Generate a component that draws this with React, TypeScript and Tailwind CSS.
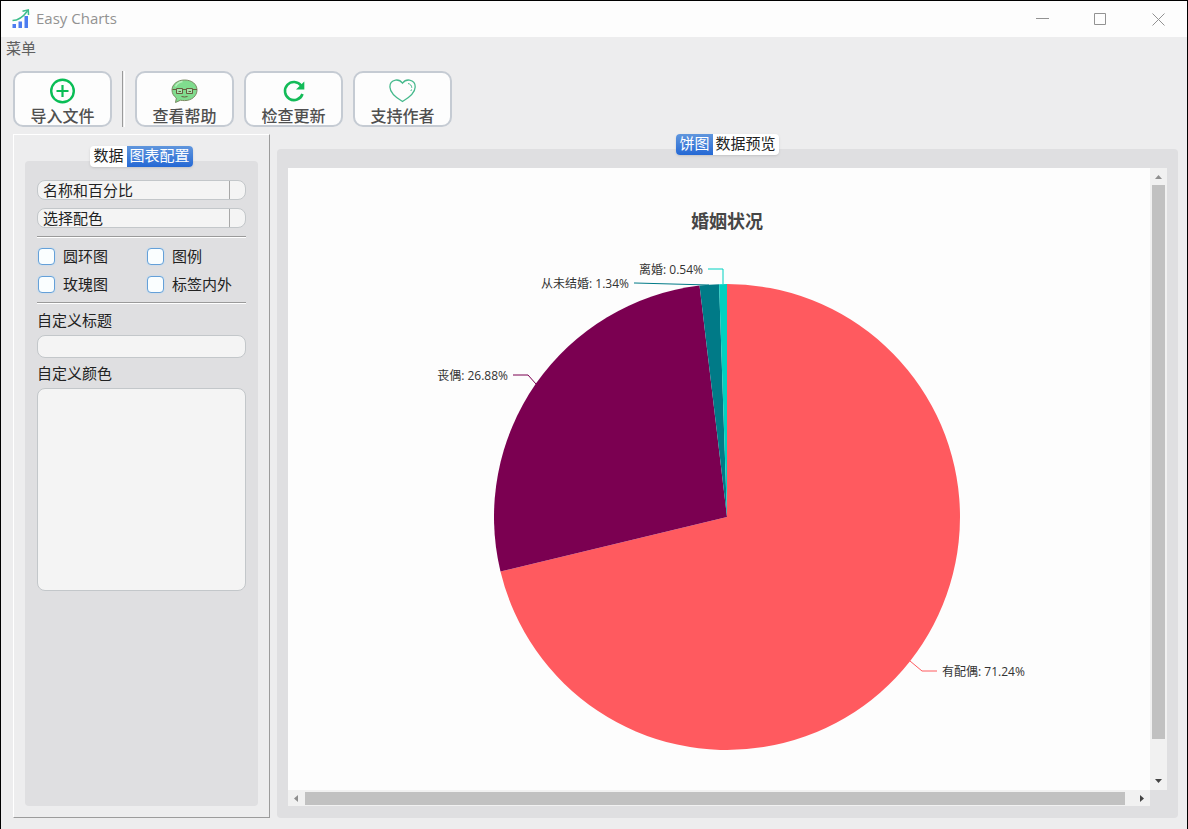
import { useState } from 'react';
import type { ReactNode } from 'react';

const SLICES = [
    { name: '有配偶', value: 71.24, color: '#ff5a5f', line: '622,493 634,503 649,503', x: 654, y: 508, anchor: 'start' as const },
    { name: '丧偶', value: 26.88, color: '#7b0051', line: '248,216 240,207 225,207', x: 220, y: 212, anchor: 'end' as const },
    { name: '从未结婚', value: 1.34, color: '#007a87', line: '421,117 347,115 346,115', x: 341, y: 120, anchor: 'end' as const },
    { name: '离婚', value: 0.54, color: '#00d1c1', line: '435,116 435,101 420,101', x: 415, y: 106, anchor: 'end' as const },
];

const CENTER = { x: 439, y: 349 };
const RADIUS = 233;

const pointAt = (percent: number) => {
    const angle = (percent / 100) * Math.PI * 2 - Math.PI / 2;
    return `${CENTER.x + RADIUS * Math.cos(angle)} ${CENTER.y + RADIUS * Math.sin(angle)}`;
};

const slicePath = (start: number, value: number) =>
    `M${CENTER.x} ${CENTER.y} L${pointAt(start)} A${RADIUS} ${RADIUS} 0 ${value > 50 ? 1 : 0} 1 ${pointAt(start + value)} Z`;

const PieChart = () => {
    let start = 0;
    return (
        <svg viewBox="0 0 862 622" className="w-full h-full" role="img" aria-label="婚姻状况">
            <text x="439" y="60" textAnchor="middle" fontSize="18" fontWeight="700" fill="#464646">婚姻状况</text>
            {SLICES.map(slice => {
                const d = slicePath(start, slice.value);
                start += slice.value;
                return (
                    <g key={slice.name}>
                        <path d={d} fill={slice.color} />
                        <polyline points={slice.line} fill="none" stroke={slice.color} />
                        <text x={slice.x} y={slice.y} textAnchor={slice.anchor} fontSize="12" fill="#333">
                            {slice.name}: {slice.value}%
                        </text>
                    </g>
                );
            })}
        </svg>
    );
};

const LogoIcon = () => (
    <svg width="18" height="20" viewBox="0 0 18 20" aria-hidden="true">
        <path d="M.5 15H4v4H.5zM6.500 12.500H10V19H6.500zM12.500 7H16v12h-3.500z" fill="#4c7cf0" />
        <path d="M.5 11.500C7 11.500 11 8 15.500 2" fill="none" stroke="#3dbd8c" strokeWidth="1.5" />
        <path d="M10.500 2.200 16.300 1 16.500 6" fill="none" stroke="#3dbd8c" strokeWidth="1.500" />
    </svg>
);

const ImportIcon = () => (
    <svg width="26" height="26" viewBox="0 0 26 26" fill="none" stroke="#09bd55" aria-hidden="true">
        <circle cx="12.500" cy="13" r="11.300" strokeWidth="2.400" />
        <path d="M12.500 7v12M6.500 13h12" strokeWidth="2.200" />
    </svg>
);

const HelpIcon = () => (
    <svg width="28" height="26" viewBox="0 0 28 26" fill="none" aria-hidden="true">
        <path
            d="M13.500 2C6.500 2 1 6.300 1 12c0 3.500 1.800 6.200 4.400 8L4.500 24.500l5-2.300c1.300.3 2.600.4 4 .4 7.500 0 12.500-4.900 12.500-10.600S21 2 13.500 2Z"
            fill="#80dc8e"
            stroke="#7a8a62"
        />
        <path d="M4.500 8.500C6 5.500 8.500 4 11.500 3.600" stroke="#b9f0bf" strokeWidth="1.500" />
        <path d="M5.500 10.500h6v5h-6zM15.500 10.500h6v5h-6z" fill="#a5e6ac" stroke="#695c40" />
        <path d="M11.500 11.500h4M1.500 11.500h4M21.500 11.500H26M7.500 13.500H10M17.500 13.500H20M10.500 18.500q3 1 6 0" stroke="#695c40" />
    </svg>
);

const UpdateIcon = () => (
    <svg width="26" height="26" viewBox="0 0 26 26" fill="none" aria-hidden="true">
        <path d="M20.300 7.800A9 9 0 1 0 21.500 16" stroke="#13bb58" strokeWidth="2.600" />
        <path d="M23.300 3.500v8h-8.300z" fill="#13bb58" />
    </svg>
);

const HeartIcon = () => (
    <svg width="28" height="26" viewBox="0 0 28 26" fill="none" stroke="#45b98c" strokeWidth="1.300" aria-hidden="true">
        <path d="M13.500 5.200C11.500 2.500 9 1.700 6.500 2.100 3 2.700.8 5.500.9 9c.2 6.300 6.600 11 12.600 14.500C19.500 20 26 15.300 26.200 9c.1-3.500-2.200-6.300-5.700-6.900-2.500-.4-5 .4-7 3.100Z" />
        <path d="M19 5.500c2.300.5 3.700 2 3.800 4.300M22.500 11.500l-.6 1.500" strokeWidth="1" />
    </svg>
);

const ToolButton = ({ label, children }: { label: string; children: ReactNode }) => (
    <button className="flex flex-col items-center justify-end gap-[3px] w-[99px] h-14 rounded-[10px] border-2 border-[#c5cbd3] bg-[#fdfdfd] text-base leading-[18px] font-medium text-[#505050]">
        {children}
        <span>{label}</span>
    </button>
);

const Tabs = ({ items, initial }: { items: string[]; initial: number }) => {
    const [active, setActive] = useState(initial);
    return (
        <div role="tablist" className="relative z-10 flex self-center h-[21px] -mb-[6px] rounded bg-white shadow-sm overflow-hidden">
            {items.map((item, i) => (
                <button
                    key={item}
                    role="tab"
                    aria-selected={i === active}
                    onClick={() => setActive(i)}
                    className={i === active
                        ? 'px-[3px] pb-[2px] leading-[19px] text-white bg-linear-to-b from-[#6096dd] to-[#2468d4]'
                        : 'px-[3px] pb-[2px] leading-[19px] text-[#222]'}
                >
                    {item}
                </button>
            ))}
        </div>
    );
};

const ComboBox = ({ label, options }: { label: string; options: string[] }) => (
    <div className="flex h-5 shrink-0 rounded-lg border border-[#c3c7ca] bg-[#f4f4f4] overflow-hidden">
        <select aria-label={label} className="flex-1 min-w-0 appearance-none pl-[5px] leading-[18px] outline-none">
            {options.map(option => <option key={option}>{option}</option>)}
        </select>
        <span className="w-4 border-l border-[#a8a8a8]" />
    </div>
);

const Divider = () => <hr className="h-[2px] shrink-0 border-t border-b border-t-[#9a9a9a] border-b-white" />;

const CheckItem = ({ label }: { label: string }) => (
    <label className="flex items-center gap-2 h-5">
        <input
            type="checkbox"
            className="appearance-none w-[17px] h-[17px] rounded border border-[#65a0d8] bg-[#fafeff] checked:bg-[#3b82e6] shadow-[0_0_2px_#b5d8f5]"
        />
        {label}
    </label>
);

const Arrow = ({ points, color }: { points: string; color: string }) => (
    <svg width="17" height="17" viewBox="0 0 17 17" className="shrink-0" aria-hidden="true">
        <polygon points={points} fill={color} />
    </svg>
);

const ConfigPanel = () => (
    <section className="flex flex-col w-[257px] shrink-0 p-[11px] border border-t-white border-l-white border-r-[#9c9c9c] border-b-[#9c9c9c]">
        <Tabs items={['数据', '图表配置']} initial={1} />
        <div className="flex-1 flex flex-col gap-2 px-3 pt-[19px] rounded bg-[#dfdfe1]">
            <ComboBox label="标签格式" options={['名称和百分比', '名称', '百分比']} />
            <ComboBox label="配色" options={['选择配色']} />
            <Divider />
            <div className="grid grid-cols-[109px_1fr] gap-y-2 px-px">
                <CheckItem label="圆环图" />
                <CheckItem label="图例" />
                <CheckItem label="玫瑰图" />
                <CheckItem label="标签内外" />
            </div>
            <Divider />
            <div className="flex flex-col gap-[3px] -mt-1">
                <label htmlFor="title" className="leading-6">自定义标题</label>
                <input id="title" className="h-[23px] px-2 rounded-lg border border-[#c3c7ca] bg-[#f4f4f4] outline-none" />
                <label htmlFor="colors" className="leading-6">自定义颜色</label>
                <textarea id="colors" className="h-[203px] px-2 rounded-lg border border-[#c3c7ca] bg-[#f4f4f4] outline-none resize-none" />
            </div>
        </div>
    </section>
);

const ChartPanel = () => (
    <section className="flex-1 min-w-0 flex flex-col">
        <Tabs items={['饼图', '数据预览']} initial={0} />
        <div className="flex-1 min-h-0 flex flex-col px-[11px] pt-[19px] pb-3 rounded bg-[#dfdfe1]">
            <div className="flex-1 min-h-0 flex">
                <div className="flex-1 min-w-0 bg-[#fdfdfd]">
                    <PieChart />
                </div>
                <div className="w-[17px] flex flex-col items-center bg-[#f1f1f1]">
                    <Arrow points="5,11 12,11 8.500,7" color="#8f8f8f" />
                    <div className="w-[13px] flex-1 bg-[#c1c1c1]" />
                    <div className="h-[34px]" />
                    <Arrow points="5,6 12,6 8.500,10" color="#444" />
                </div>
            </div>
            <div className="flex">
                <div className="flex-1 flex items-center h-4 bg-[#f1f1f1]">
                    <Arrow points="10,5 10,12 6,8.500" color="#8f8f8f" />
                    <div className="h-[13px] flex-1 bg-[#c1c1c1]" />
                    <div className="w-2" />
                    <Arrow points="7,5 7,12 11,8.500" color="#444" />
                </div>
                <div className="w-[17px]" />
            </div>
        </div>
    </section>
);

const App = () => (
    <div className="flex flex-col h-screen border-t border-x border-black bg-[#ededee] font-['Open_Sans','Noto_Sans_CJK_SC',sans-serif] text-[15px] text-[#222]">
        <header className="flex items-center h-9 shrink-0 pl-[11px] bg-[#fdfdfd] text-[#929292]">
            <LogoIcon />
            <h1 className="flex-1 pl-[6px] leading-5 pb-[2px]">Easy Charts</h1>
            <button aria-label="最小化" className="w-[58px] h-full flex items-center justify-center">
                <svg width="13" height="13" stroke="currentColor"><path d="M0 5.500h13" /></svg>
            </button>
            <button aria-label="最大化" className="w-[58px] h-full flex items-center justify-center">
                <svg width="13" height="13" fill="none" stroke="currentColor"><path d="M.5 .5h11v11h-11z" /></svg>
            </button>
            <button aria-label="关闭" className="w-[58px] h-full flex items-center justify-center">
                <svg width="13" height="13" stroke="currentColor"><path d="M.5 .5l12 12M12.500 .5l-12 12" /></svg>
            </button>
        </header>
        <nav className="h-6 shrink-0 pl-[5px]">
            <button className="leading-[22px] text-[#606060]">菜单</button>
        </nav>
        <div className="flex shrink-0 gap-[10px] pl-3 pt-[10px] pb-[7px]">
            <ToolButton label="导入文件"><ImportIcon /></ToolButton>
            <div className="w-[3px] border-l border-r border-l-[#9a9a9a] border-r-white" />
            <ToolButton label="查看帮助"><HelpIcon /></ToolButton>
            <ToolButton label="检查更新"><UpdateIcon /></ToolButton>
            <ToolButton label="支持作者"><HeartIcon /></ToolButton>
        </div>
        <main className="flex-1 min-h-0 flex gap-[7px] pl-3 pr-[9px] pb-[11px]">
            <ConfigPanel />
            <ChartPanel />
        </main>
    </div>
);

export default App;
